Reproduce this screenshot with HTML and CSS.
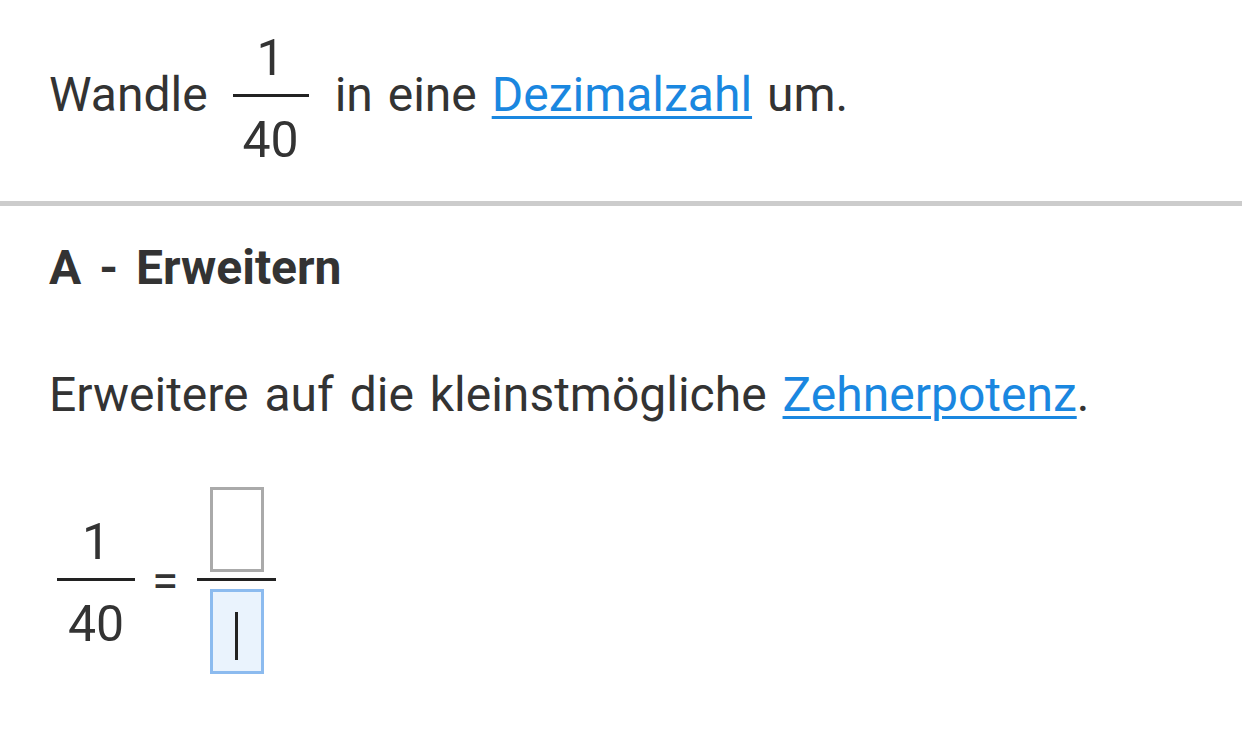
FILE: index.html
```html
<!DOCTYPE html>
<html lang="de">
<head>
<meta charset="utf-8">
<link rel="stylesheet" href="styles.css">
</head>
<body>
<section class="task">
  <div class="task-row">
    <span class="task-text">Wandle</span>
    <span class="frac frac-top">
      <span class="num">1</span>
      <span class="bar"></span>
      <span class="den">40</span>
    </span>
    <span class="task-text task-rest">in eine <a href="#" class="link">Dezimalzahl</a> um.</span>
  </div>
</section>
<div class="separator"></div>
<section class="step">
  <h2 class="step-title">A - Erweitern</h2>
  <p class="step-text">Erweitere auf die kleinstmögliche <a href="#" class="link">Zehnerpotenz</a>.</p>
  <div class="equation">
    <span class="frac frac-left">
      <span class="num">1</span>
      <span class="bar"></span>
      <span class="den">40</span>
    </span>
    <span class="eq">=</span>
    <span class="frac frac-input">
      <span class="box box-empty"></span>
      <span class="bar bar-wide"></span>
      <span class="box box-active"><span class="caret"></span></span>
    </span>
  </div>
</section>
</body>
</html>
```

FILE: styles.css
```css
html, body {
  margin: 0;
  padding: 0;
  background: #ffffff;
}
body {
  font-family: Roboto, "Noto Sans", sans-serif;
  color: #333333;
  font-size: 48px;
  line-height: 54px;
  word-spacing: 4px;
}
.task {
  padding: 33px 49px 36px;
}
.task-row {
  display: flex;
  align-items: center;
  gap: 25px;
}
.task-text {
  margin-bottom: 9px;
}
.task-rest {
  margin-left: 1px;
  word-spacing: 3px;
}
.link {
  color: #1a87e0;
  text-decoration: underline;
  text-decoration-thickness: 3px;
  text-underline-offset: 5px;
}
.frac {
  display: inline-flex;
  flex-direction: column;
  align-items: center;
  word-spacing: 0;
}
.frac-top {
  width: 76px;
}
.frac-left {
  width: 78px;
  margin-top: 5px;
}
.num, .den {
  font-size: 50px;
  line-height: 50px;
}
.num {
  padding-bottom: 11px;
}
.den {
  padding-top: 18px;
}
.bar {
  align-self: stretch;
  height: 3px;
  background: #222222;
}
.separator {
  height: 5px;
  background: #cccccc;
}
.step {
  padding: 35px 49px 40px;
}
.step-title {
  margin: 0;
  font-size: 48px;
  line-height: 54px;
  font-weight: 700;
  word-spacing: 6px;
}
.step-text {
  margin: 73px 0 0;
}
.equation {
  margin-top: 65px;
  display: flex;
  align-items: center;
  padding-left: 8px;
}
.eq {
  margin: 0 19px 0 17px;
  font-size: 48px;
}
.frac-input {
  width: 79px;
}
.bar-wide {
  margin: 6px 0 8px;
}
.box {
  width: 54px;
  height: 85px;
  box-sizing: border-box;
  border: 3px solid #aaaaaa;
  display: flex;
  align-items: center;
  justify-content: center;
}
.box-active {
  border-color: #8cbbef;
  background: #eaf3fd;
  padding-top: 9px;
}
.caret {
  width: 3px;
  height: 48px;
  background: #222222;
}
```
